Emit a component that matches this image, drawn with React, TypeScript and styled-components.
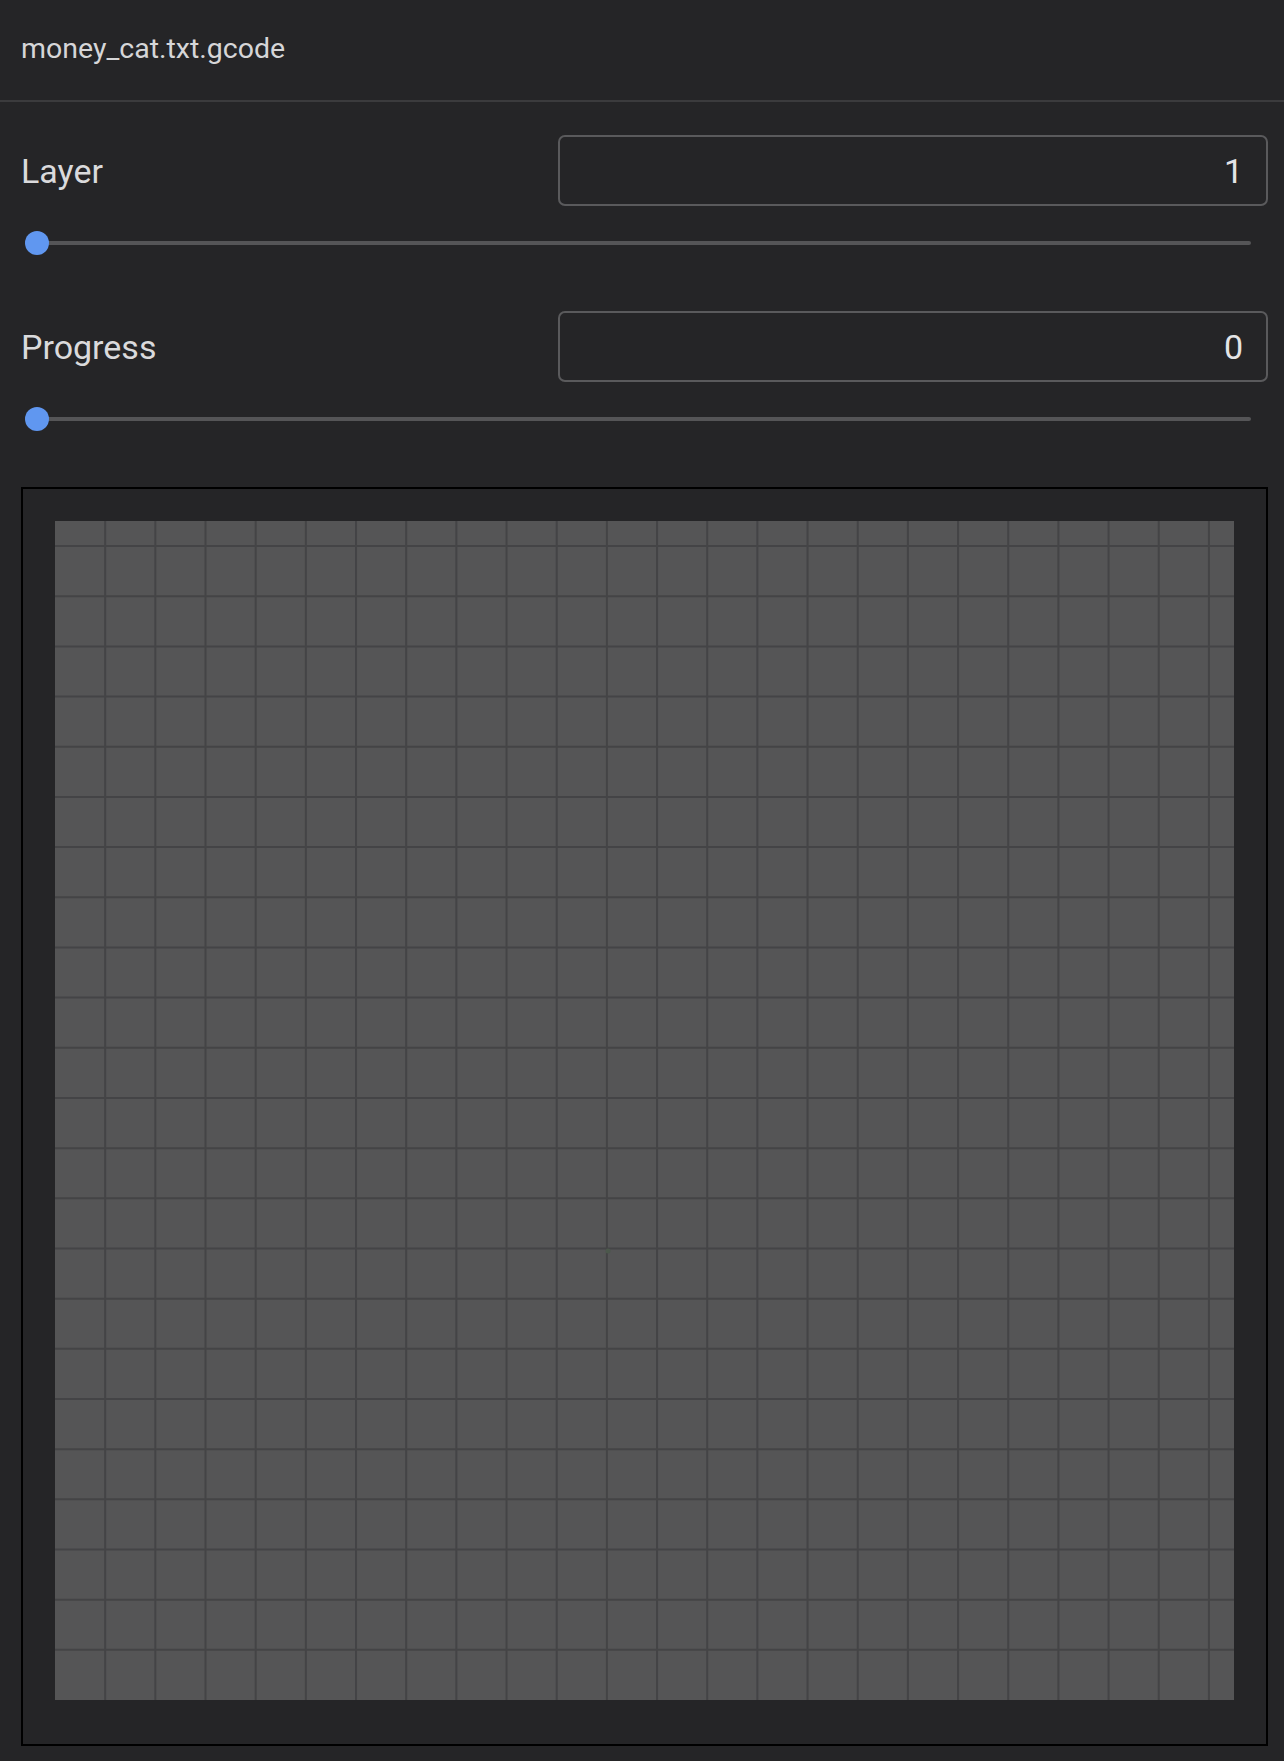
import React from "react";
import styled, { createGlobalStyle } from "styled-components";

const Global = createGlobalStyle`
  html, body { margin: 0; padding: 0; background: #252527; }
  body { font-family: Roboto, "Liberation Sans", sans-serif; }
  * { box-sizing: border-box; }
`;

const Page = styled.div`
  width: 1284px;
  min-height: 1761px;
  background: #252527;
  display: flex;
  flex-direction: column;
  padding-bottom: 15px;
`;

const Header = styled.header`
  height: 100px;
  display: flex;
  align-items: center;
  padding: 0 16px 4px 21px;
  font-size: 28.5px;
  color: #d6d6d8;
`;

const Divider = styled.div`
  height: 2px;
  background: #3b3b3d;
`;

const Body = styled.div`
  display: flex;
  flex-direction: column;
  padding: 33px 16px 0 21px;
`;

const Field = styled.div<{ $gap?: number }>`
  display: flex;
  flex-direction: column;
  margin-top: ${(p) => p.$gap ?? 0}px;
`;

const FieldRow = styled.div`
  display: flex;
  align-items: center;
  justify-content: space-between;
`;

const Label = styled.label`
  font-size: 34px;
  color: #dadadc;
`;

const NumberInput = styled.input`
  width: 710px;
  height: 71px;
  border: 2px solid #5a5a5c;
  border-radius: 7px;
  background: transparent;
  color: #e4e4e6;
  font-family: Roboto, "Liberation Sans", sans-serif;
  font-size: 34px;
  text-align: right;
  padding: 0 23px 0 16px;
  outline: none;
`;

const SliderWrap = styled.div`
  position: relative;
  height: 24px;
  margin-top: 25px;
  padding: 0 17px 0 16px;
  display: flex;
  align-items: center;
`;

const Track = styled.div`
  flex: 1;
  height: 4px;
  border-radius: 2px;
  background: #555557;
`;

const Thumb = styled.div`
  position: absolute;
  top: 0;
  left: 4px;
  width: 24px;
  height: 24px;
  border-radius: 50%;
  background: #6097f0;
`;

const Viewer = styled.div`
  margin-top: 56px;
  border: 2px solid #000;
  padding: 32px 32px 44px 32px;
  background: #252527;
`;

const GridSvg = styled.svg`
  display: block;
  width: 100%;
  height: auto;
`;

function Slider() {
  return (
    <SliderWrap>
      <Track />
      <Thumb />
    </SliderWrap>
  );
}

function BedGrid() {
  const size = 1179;
  const step = size / 23.5;
  const vs = Array.from({ length: 23 }, (_, i) => step * (i + 1));
  const hs = Array.from({ length: 23 }, (_, i) => step / 2 + step * i);
  return (
    <GridSvg viewBox={`0 0 ${size} ${size}`}>
      <rect x={0} y={0} width={size} height={size} fill="#555556" />
      {vs.map((x, i) => (
        <line key={"v" + i} x1={x} y1={0} x2={x} y2={size} stroke="#444446" strokeWidth={2} />
      ))}
      {hs.map((y, i) => (
        <line key={"h" + i} x1={0} y1={y} x2={size} y2={y} stroke="#444446" strokeWidth={2} />
      ))}
      <circle cx={553} cy={730} r={2.5} fill="#4c584c" />
    </GridSvg>
  );
}

export default function App() {
  return (
    <Page>
      <Global />
      <Header>money_cat.txt.gcode</Header>
      <Divider />
      <Body>
        <Field>
          <FieldRow>
            <Label>Layer</Label>
            <NumberInput readOnly value="1" />
          </FieldRow>
          <Slider />
        </Field>
        <Field $gap={56}>
          <FieldRow>
            <Label>Progress</Label>
            <NumberInput readOnly value="0" />
          </FieldRow>
          <Slider />
        </Field>
        <Viewer>
          <BedGrid />
        </Viewer>
      </Body>
    </Page>
  );
}
